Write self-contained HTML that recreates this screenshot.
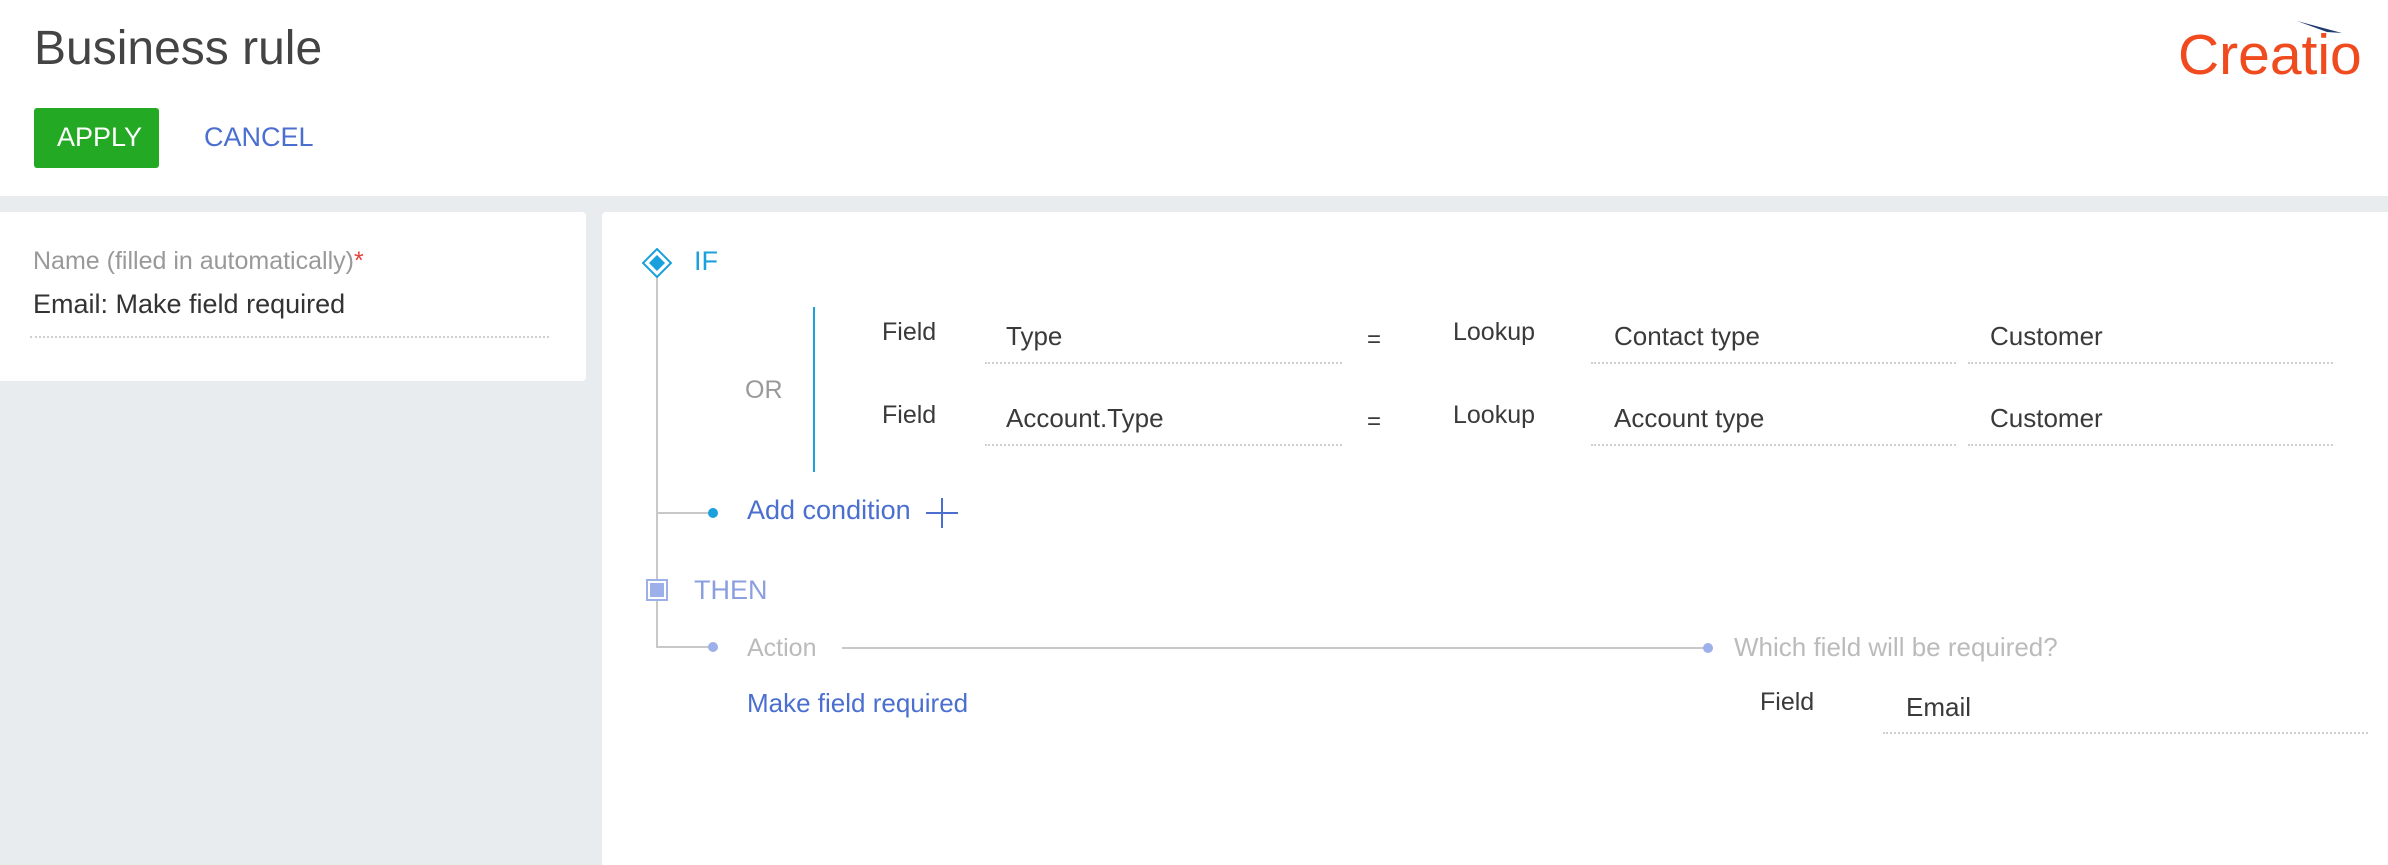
<!DOCTYPE html>
<html><head><meta charset="utf-8">
<style>
*{margin:0;padding:0;box-sizing:border-box}
body{width:2388px;height:865px;background:#e9ecee;position:relative;overflow:hidden;font-family:"Liberation Sans",sans-serif;color:#3a3a3a}
.a{position:absolute;line-height:1;white-space:nowrap}
.dot{position:absolute;border-bottom:2px dotted #cfcfcf;height:0}
.hl{position:absolute;background:#c8c8c8}
</style></head><body>
<div class="a" style="left:0;top:0;width:2388px;height:196px;background:#fff"></div>
<div class="a" style="left:34px;top:25px;font-size:48px;color:#444;font-weight:300">Business rule</div>
<div class="a" style="left:34px;top:108px;width:125px;height:60px;background:#23a923;border-radius:3px"></div>
<div class="a" style="left:57px;top:124px;font-size:27px;color:#fff">APPLY</div>
<div class="a" style="left:204px;top:124px;font-size:27px;color:#4a6fcf">CANCEL</div>
<div class="a" style="left:2178px;top:27px;font-size:57px;color:#f04a1f">Creatio</div>
<svg class="a" style="left:2290px;top:18px" width="60" height="20"><polygon points="7,3 52,15 37,14" fill="#1f3a6e"/></svg>

<div class="a" style="left:0;top:212px;width:586px;height:169px;background:#fff;border-radius:0 4px 4px 0"></div>
<div class="a" style="left:33px;top:249px;font-size:25px;color:#999">Name (filled in automatically)<span style="color:#e8413a">*</span></div>
<div class="a" style="left:33px;top:291px;font-size:27px;color:#333">Email: Make field required</div>
<div class="dot" style="left:30px;top:336px;width:519px"></div>

<div class="a" style="left:602px;top:212px;width:1786px;height:653px;background:#fff;border-radius:4px 0 0 0"></div>
<div class="hl" style="left:656px;top:276px;width:2px;height:372px"></div>
<div class="hl" style="left:656px;top:512px;width:57px;height:2px"></div>
<div class="hl" style="left:656px;top:646px;width:57px;height:2px"></div>
<svg class="a" style="left:642px;top:248px" width="30" height="30"><polygon points="15,1 29,15 15,29 1,15" fill="#fff" stroke="#1aa0dc" stroke-width="2"/><polygon points="15,7 23,15 15,23 7,15" fill="#1aa0dc"/></svg>
<div class="a" style="left:694px;top:248px;font-size:27px;color:#1aa0dc">IF</div>
<div class="a" style="left:745px;top:378px;font-size:25px;color:#999">OR</div>
<div class="a" style="left:813px;top:307px;width:2px;height:165px;background:#1aa0dc"></div>

<div class="a" style="left:882px;top:320px;font-size:25px">Field</div>
<div class="a" style="left:1006px;top:323px;font-size:26px">Type</div>
<div class="dot" style="left:985px;top:362px;width:357px"></div>
<div class="a" style="left:1367px;top:328px;font-size:24px">=</div>
<div class="a" style="left:1453px;top:320px;font-size:25px">Lookup</div>
<div class="a" style="left:1614px;top:323px;font-size:26px">Contact type</div>
<div class="dot" style="left:1591px;top:362px;width:365px"></div>
<div class="a" style="left:1990px;top:323px;font-size:26px">Customer</div>
<div class="dot" style="left:1968px;top:362px;width:365px"></div>

<div class="a" style="left:882px;top:403px;font-size:25px">Field</div>
<div class="a" style="left:1006px;top:405px;font-size:26px">Account.Type</div>
<div class="dot" style="left:985px;top:444px;width:357px"></div>
<div class="a" style="left:1367px;top:410px;font-size:24px">=</div>
<div class="a" style="left:1453px;top:403px;font-size:25px">Lookup</div>
<div class="a" style="left:1614px;top:405px;font-size:26px">Account type</div>
<div class="dot" style="left:1591px;top:444px;width:365px"></div>
<div class="a" style="left:1990px;top:405px;font-size:26px">Customer</div>
<div class="dot" style="left:1968px;top:444px;width:365px"></div>

<div class="a" style="left:708px;top:508px;width:10px;height:10px;border-radius:50%;background:#1aa0dc"></div>
<div class="a" style="left:747px;top:497px;font-size:27px;color:#4a6fcf">Add condition</div>
<div class="a" style="left:926px;top:512px;width:32px;height:2px;background:#4a6fcf"></div>
<div class="a" style="left:941px;top:498px;width:2px;height:30px;background:#4a6fcf"></div>

<div class="a" style="left:646px;top:579px;width:22px;height:22px;border:2px solid #9db0ea;background:#fff"></div>
<div class="a" style="left:650px;top:583px;width:14px;height:14px;background:#9db0ea"></div>
<div class="a" style="left:694px;top:577px;font-size:27px;color:#8b9fe0">THEN</div>

<div class="a" style="left:708px;top:642px;width:10px;height:10px;border-radius:50%;background:#9db0ea"></div>
<div class="a" style="left:747px;top:636px;font-size:25px;color:#bbb">Action</div>
<div class="hl" style="left:842px;top:647px;width:864px;height:2px"></div>
<div class="a" style="left:1703px;top:643px;width:10px;height:10px;border-radius:50%;background:#9db0ea"></div>
<div class="a" style="left:1734px;top:634px;font-size:26px;color:#bbb">Which field will be required?</div>

<div class="a" style="left:747px;top:690px;font-size:26px;color:#4a6fcf">Make field required</div>
<div class="a" style="left:1760px;top:690px;font-size:25px">Field</div>
<div class="a" style="left:1906px;top:694px;font-size:26px">Email</div>
<div class="dot" style="left:1883px;top:732px;width:485px"></div>
</body></html>
